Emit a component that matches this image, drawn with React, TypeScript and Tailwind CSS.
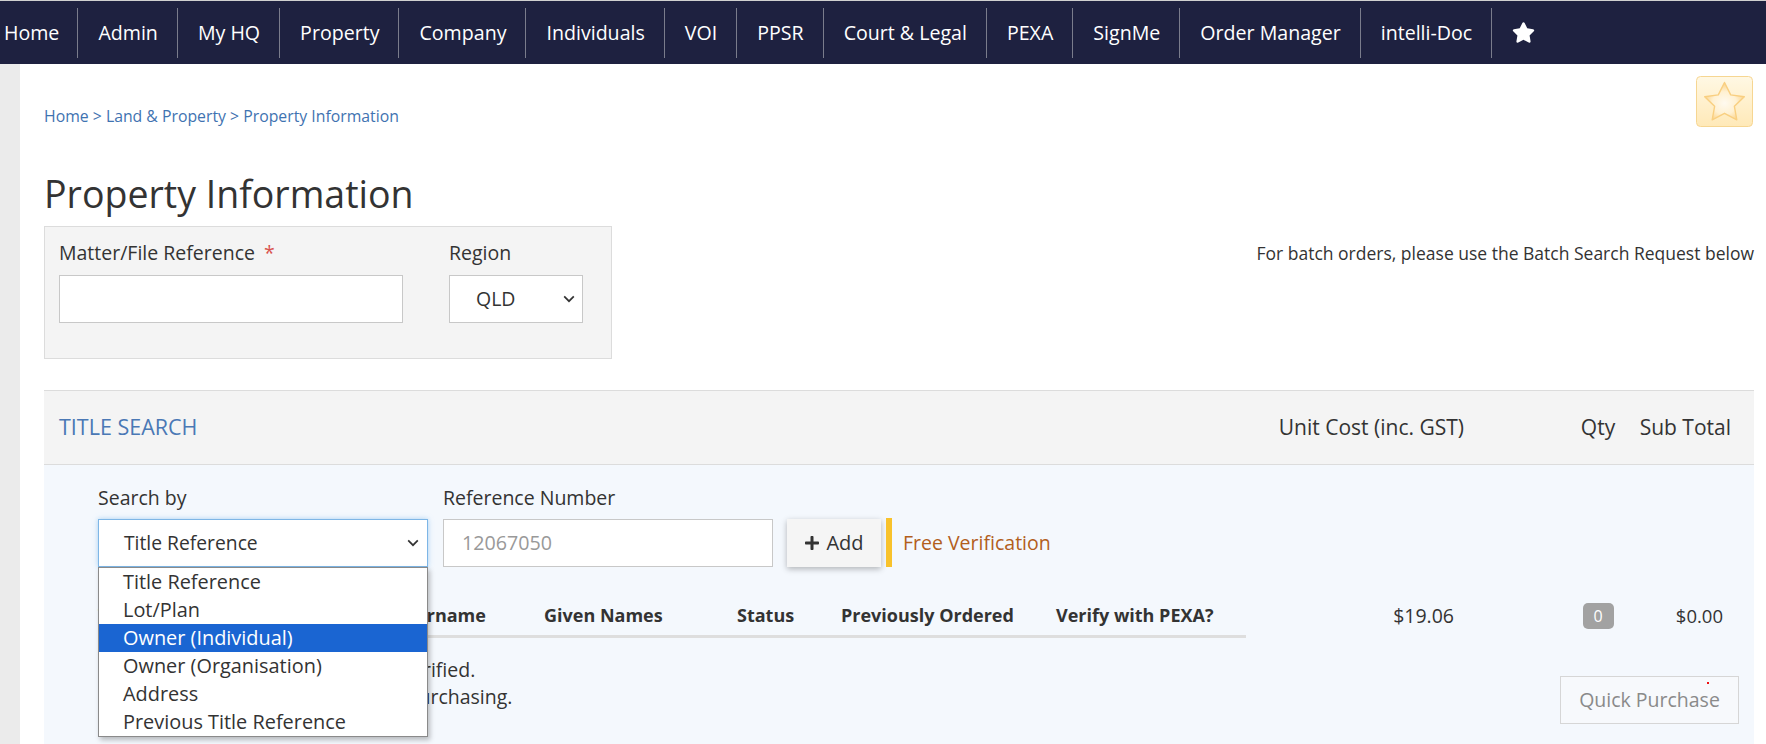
import { FaStar, FaPlus } from 'react-icons/fa'

const navItems = ['Home', 'Admin', 'My HQ', 'Property', 'Company', 'Individuals', 'VOI', 'PPSR', 'Court & Legal', 'PEXA', 'SignMe', 'Order Manager', 'intelli-Doc']

const searchOptions = ['Title Reference', 'Lot/Plan', 'Owner (Individual)', 'Owner (Organisation)', 'Address', 'Previous Title Reference']

const columns = [
  { label: 'Title', w: 'w-[307px]' },
  { label: 'Surname', w: 'w-[139px]' },
  { label: 'Given Names', w: 'w-[193px]' },
  { label: 'Status', w: 'w-[104px]' },
  { label: 'Previously Ordered', w: 'w-[215px]' },
  { label: 'Verify with PEXA?', w: 'w-[190px]' },
]

function Chevron() {
  return (
    <svg width="12" height="8" viewBox="0 0 12 8">
      <path d="M1.2 1.4l4.8 4.8 4.8-4.8" fill="none" stroke="#333" strokeWidth="1.7" />
    </svg>
  )
}

function FavouriteBox() {
  return (
    <svg width="57" height="51" viewBox="0 0 57 51" className="mr-px shrink-0">
      <defs>
        <linearGradient id="boxBg" x1="0" y1="0" x2="0" y2="1">
          <stop offset="0" stopColor="#fff8e4" />
          <stop offset="1" stopColor="#ffe9b8" />
        </linearGradient>
        <radialGradient id="starFill" cx="0.5" cy="0.55" r="0.55">
          <stop offset="0" stopColor="#fffaf0" />
          <stop offset="0.55" stopColor="#fff1d2" />
          <stop offset="1" stopColor="#fbd083" />
        </radialGradient>
      </defs>
      <rect x="0.5" y="0.5" width="56" height="50" rx="4" fill="url(#boxBg)" stroke="#f6d692" />
      <path
        d="M28.5 6.5l6.2 12.4 13.6 1.9-9.9 9.5 2.4 13.5-12.3-6.5-12.3 6.5 2.4-13.5-9.9-9.5 13.6-1.9z"
        fill="url(#starFill)"
        stroke="#f9cf80"
        strokeWidth="1.4"
        strokeLinejoin="round"
      />
    </svg>
  )
}

export default function App() {
  return (
    <div className="w-full h-[744px] overflow-hidden bg-white font-['Open_Sans',sans-serif] text-[#333]">
      <nav className="h-[64px] bg-[#1e2140] border-t border-[#d0d0d0] flex items-center">
        {navItems.map((item, i) => (
          <div
            key={item}
            className={i === 0 ? 'h-[50px] flex items-center pl-[4px] pr-[18px] text-[19.6px] text-white whitespace-nowrap' : 'h-[50px] flex items-center pl-5 pr-[19px] border-l border-[#7a7c8c] text-[19.6px] text-white whitespace-nowrap'}
          >
            {item}
          </div>
        ))}
        <div className="h-[50px] flex items-center px-5 border-l border-[#7a7c8c]">
          <FaStar className="text-white text-[23px]" />
        </div>
      </nav>

      <div className="flex h-[680px]">
        <div className="w-[20px] shrink-0 bg-[#ebebeb]" />
        <main className="flex-1 min-w-0 pl-[24px] pr-[12px]">
          <div className="flex justify-between items-start pt-3">
            <div className="mt-[30px] text-[15.8px] leading-5 text-[#3f73b1]">
              Home &gt; Land &amp; Property &gt; Property Information
            </div>
            <FavouriteBox />
          </div>

          <h1 className="mt-[45px] text-[37.5px] leading-[44px] text-[#333]">Property Information</h1>

          <div className="flex justify-between items-start mt-[10px]">
            <div className="w-[568px] h-[133px] shrink-0 bg-[#f4f4f4] border border-[#dcdcdc] pt-[14px] pl-[14px] flex gap-[46px]">
              <div>
                <div className="text-[19.5px] leading-6">
                  Matter/File Reference <span className="text-[#d9534f] ml-1">*</span>
                </div>
                <div className="mt-[10px] w-[344px] h-[48px] bg-white border border-[#c8c8c8]" />
              </div>
              <div>
                <div className="text-[19.5px] leading-6">Region</div>
                <div className="mt-[10px] w-[134px] h-[48px] bg-white border border-[#c8c8c8] flex items-center justify-between pl-[26px] pr-[7px] text-[19.5px]">
                  QLD
                  <Chevron />
                </div>
              </div>
            </div>
            <div className="mt-[15px] text-[17.5px] leading-6 whitespace-nowrap">For batch orders, please use the Batch Search Request below</div>
          </div>

          <section className="mt-[31px] border-t border-[#dcdcdc]">
            <div className="h-[74px] bg-[#f4f4f4] border-b border-[#dcdcdc] flex items-center">
              <div className="flex-1 min-w-0 pl-[15px] text-[21.5px] text-[#4a78b5] uppercase">Title Search</div>
              <div className="w-[514px] shrink-0 flex text-[21px] whitespace-nowrap">
                <div className="w-[300px] flex justify-end pr-[76px]">Unit Cost (inc. GST)</div>
                <div className="w-[116px] flex justify-center">Qty</div>
                <div className="w-[98px] flex justify-end pr-[23px]">Sub Total</div>
              </div>
            </div>

            <div className="flex bg-[#f4f8fd] h-[280px]">
              <div className="flex-1 min-w-0 pl-[54px] pt-[21px]">
                <div className="flex items-end">
                  <div className="relative w-[330px] shrink-0">
                    <div className="text-[19.5px] leading-6 mb-[9px]">Search by</div>
                    <div className="h-[48px] bg-white border border-[#7eb6e6] shadow-[0_0_5px_rgba(102,175,233,0.55)] flex items-center justify-between pl-[25px] pr-[8px] text-[19.3px]">
                      Title Reference
                      <Chevron />
                    </div>
                    <ul className="absolute top-full left-0 w-[330px] bg-white border border-[#8a8a8a] shadow-[2px_3px_5px_rgba(0,0,0,0.25)] z-10">
                      {searchOptions.map((opt) => (
                        <li
                          key={opt}
                          className={opt === 'Owner (Individual)' ? 'h-[28px] leading-[28px] pl-[24px] text-[19.9px] bg-[#1a65d2] text-white' : 'h-[28px] leading-[28px] pl-[24px] text-[19.9px] text-[#333]'}
                        >
                          {opt}
                        </li>
                      ))}
                    </ul>
                  </div>
                  <div className="ml-[15px] w-[330px] shrink-0">
                    <div className="text-[19.5px] leading-6 mb-[9px]">Reference Number</div>
                    <div className="h-[48px] bg-white border border-[#c8c8c8] flex items-center pl-[18px] text-[19.7px] text-[#999]">
                      12067050
                    </div>
                  </div>
                  <button className="ml-[14px] w-[94px] h-[48px] shrink-0 bg-[#f5f5f5] shadow-[0_2px_6px_rgba(0,0,0,0.28)] flex items-center justify-center gap-[6px] text-[20px] text-[#333]">
                    <FaPlus className="text-[16px]" />
                    Add
                  </button>
                  <div className="ml-[5px] w-[6px] h-[49px] shrink-0 bg-[#f8c22c]" />
                  <div className="ml-[11px] h-[48px] flex items-center text-[19.5px] text-[#b25e1c] whitespace-nowrap">Free Verification</div>
                </div>

                <div className="mt-[36px] w-[1148px] flex pb-[8px] border-b-[3px] border-[#dedede] text-[18px] leading-6 font-bold whitespace-nowrap">
                  {columns.map((c) => (
                    <div key={c.label} className={c.w}>{c.label}</div>
                  ))}
                </div>

                <div className="mt-[18px] ml-[5px] text-[19.5px] leading-[27px] whitespace-nowrap">
                  <p>Titles marked with a tick shall be verified.</p>
                  <p>Please recheck all details prior to purchasing.</p>
                </div>
              </div>

              <div className="w-[514px] shrink-0 flex flex-col">
                <div className="mt-[127px] h-[48px] flex items-center">
                  <div className="w-[300px] text-right pr-[86px] text-[19.5px]">$19.06</div>
                  <div className="w-[116px] flex justify-center">
                    <span className="w-[31px] h-[26px] rounded-[5px] bg-[#a2a2a2] text-white text-[16px] flex items-center justify-center">0</span>
                  </div>
                  <div className="w-[98px] text-right pr-[31px] text-[18.5px]">$0.00</div>
                </div>
                <div className="mt-[36px] flex justify-end pr-[15px]">
                  <button className="relative w-[179px] h-[48px] bg-[#f7f9fc] border border-[#d6d6d6] text-[19.5px] text-[#8a8a8a] whitespace-nowrap">
                    Quick Purchase
                    <span className="absolute top-[5px] left-[146px] w-[2px] h-[2px] bg-[#e11]" />
                  </button>
                </div>
              </div>
            </div>
          </section>
        </main>
      </div>
    </div>
  )
}
